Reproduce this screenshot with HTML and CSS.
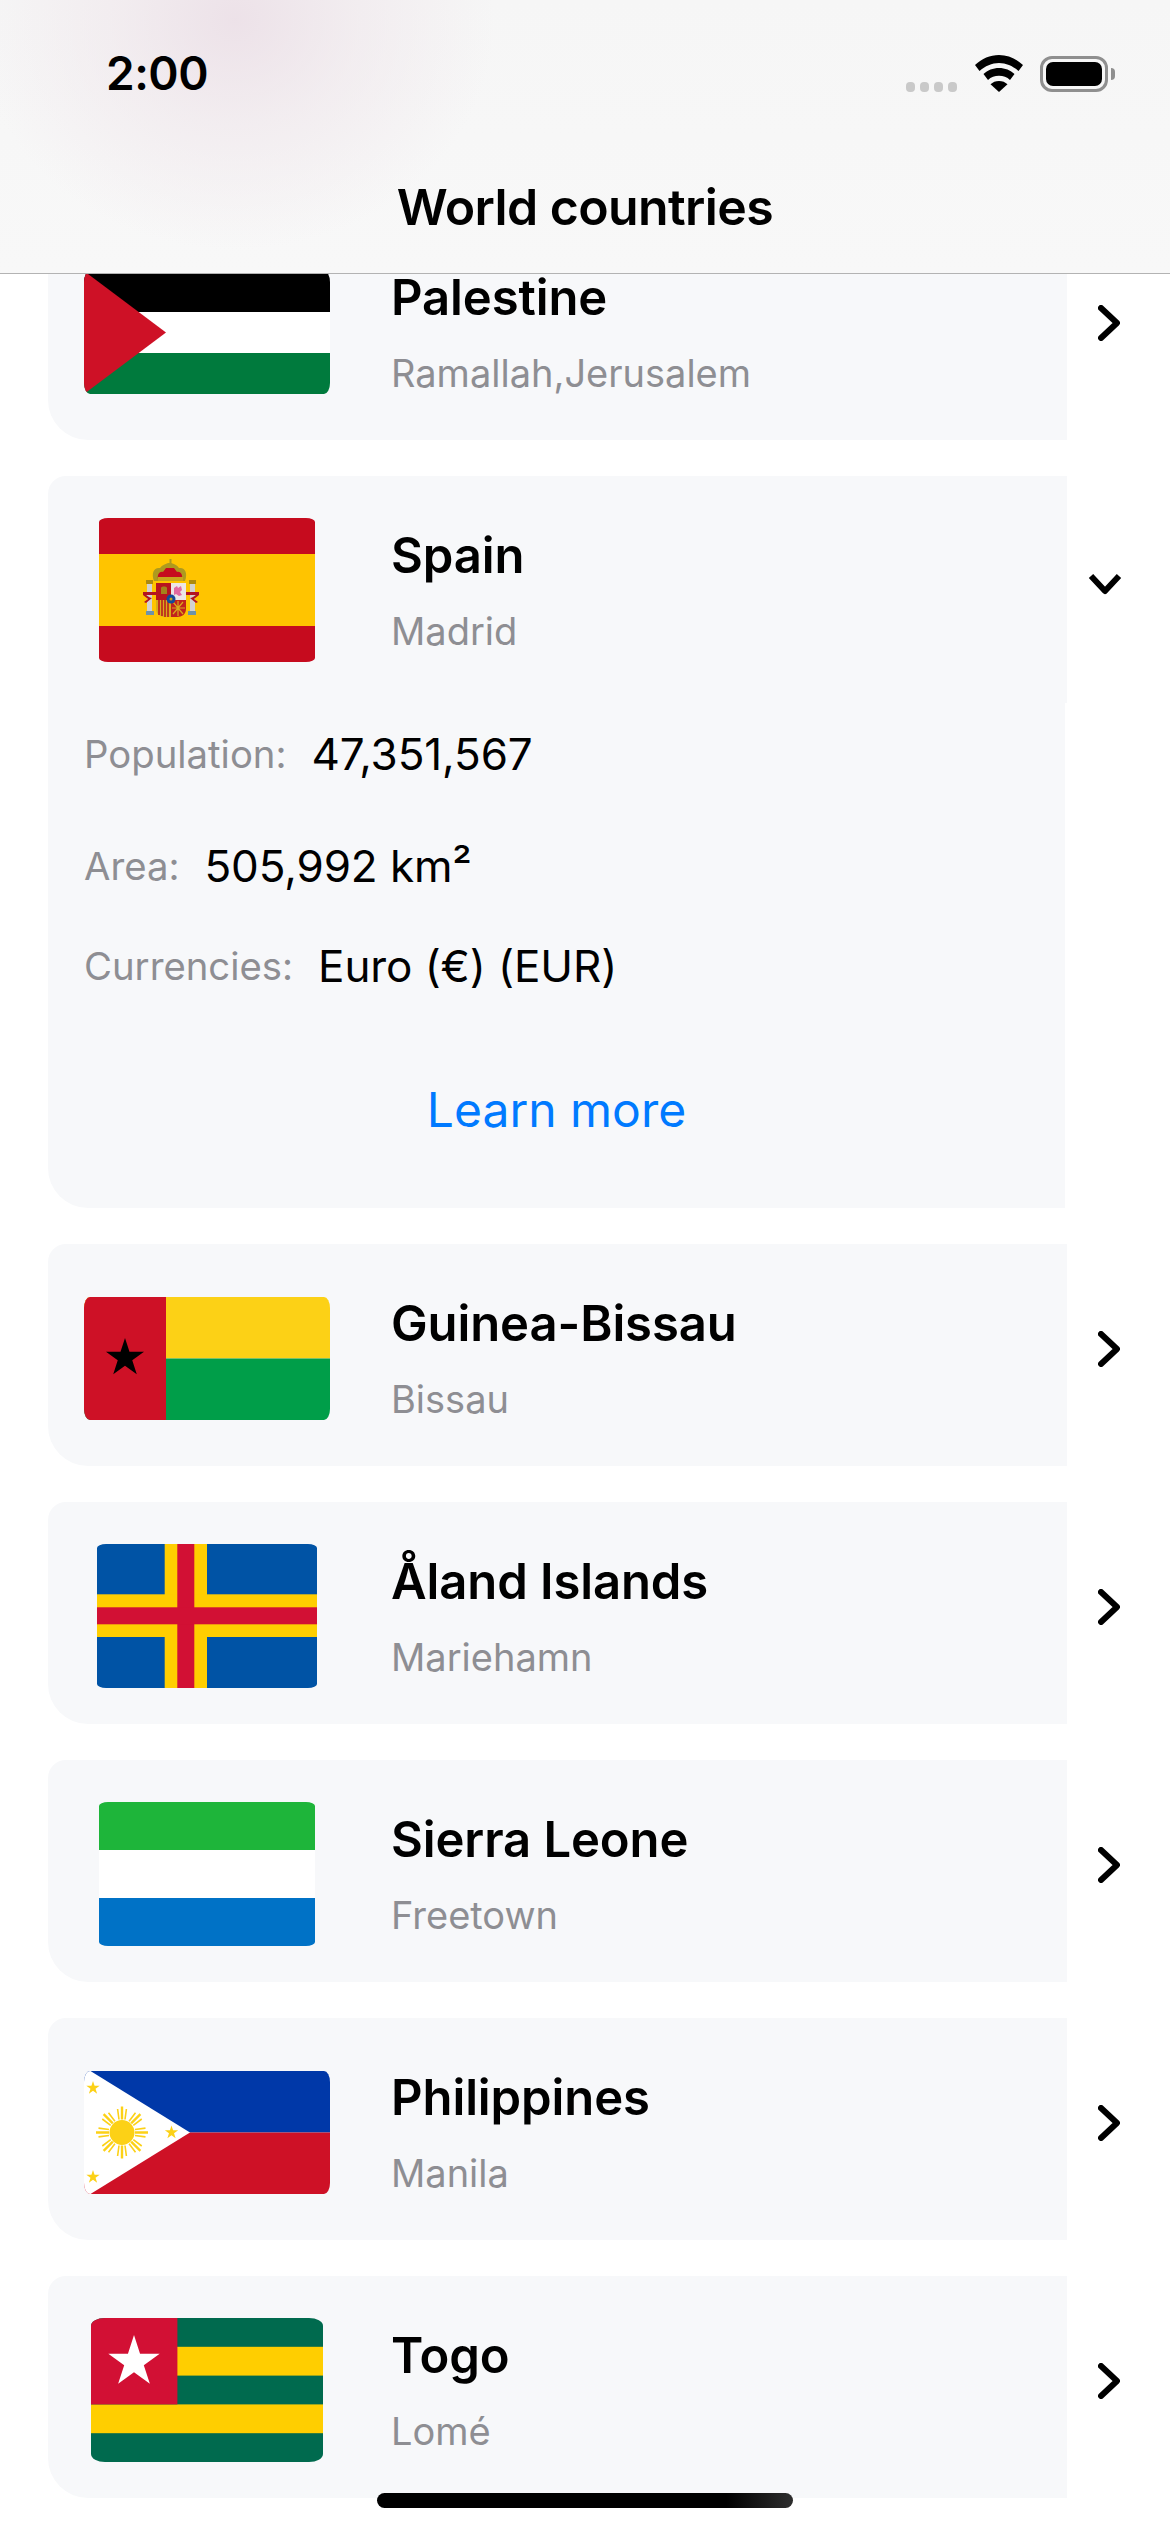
FILE: index.html
```html
<!DOCTYPE html>
<html lang="en">
<head>
<meta charset="utf-8">
<title>World countries</title>
<link rel="stylesheet" href="styles.css">
</head>
<body>
<div class="screen">
  <header class="topbar">
    <div class="status">
      <span class="time">2:00</span>
      <div class="status-icons">
        <div class="dots"><i></i><i></i><i></i><i></i></div>
        <svg class="wifi" viewBox="0 0 48 37"><path d="M24 0C15 0 7 3.500 0 10l4.500 6C10 11 17 8 24 8s14 3 19.500 8L48 10C41 3.500 33 0 24 0z"/><path d="M24 13c-6 0-11.500 2.200-15.500 6l4.500 6c3-2.800 6.800-4.200 11-4.200s8 1.400 11 4.200l4.500-6C35.500 15.200 30 13 24 13z"/><path d="M24 26c-3.300 0-6.300 1.200-8.500 3.300L24 37l8.500-7.700C30.300 27.200 27.300 26 24 26z"/></svg>
        <div class="battery"><div class="battery-fill"></div></div>
        <div class="battery-nub"></div>
      </div>
    </div>
    <h1 class="title">World countries</h1>
  </header>

  <main class="list">
    <div class="list-inner">
      <article class="row">
        <div class="card">
          <div class="flag-box">
            <svg class="flag flag-wide" viewBox="0 0 246 123"><rect width="246" height="41" fill="#000"/><rect y="41" width="246" height="41" fill="#fff"/><rect y="82" width="246" height="41" fill="#007a3d"/><polygon points="0,0 82,61.500 0,123" fill="#ce1126"/></svg>
          </div>
          <div class="names"><div class="name">Palestine</div><div class="capital">Ramallah,Jerusalem</div></div>
        </div>
        <svg class="chev" viewBox="0 0 22 36"><path d="M3 3l16 15L3 33"/></svg>
      </article>

      <article class="row">
        <div class="expanded">
          <div class="card card-head">
            <div class="flag-box">
              <svg class="flag flag-std" viewBox="0 0 216 144">
                <rect width="216" height="144" fill="#c60b1e"/><rect y="36" width="216" height="72" fill="#ffc400"/>
                <path d="M55 63c-3-8 0-14 6-13 2-3 6-4 8-5l3 0c3 1 6 2 8 5 6-1 9 5 6 13z" fill="#ad9a1f"/>
                <path d="M59 61c-1-5 2-8 5-7l3-4h8l3 4c3-1 6 2 5 7z" fill="#c60b1e"/>
                <rect x="59" y="59" width="25" height="4" fill="#c8a41c"/>
                <rect x="70.500" y="41" width="2" height="9" fill="#ad9a1f"/>
                <rect x="47" y="62" width="7" height="4" fill="#ad8a10"/><rect x="90" y="62" width="7" height="4" fill="#ad8a10"/>
                <rect x="48" y="66" width="5" height="27" fill="#d2d2d2"/><rect x="91" y="66" width="5" height="27" fill="#d2d2d2"/>
                <rect x="47" y="93" width="8" height="4" fill="#6d93a8"/><rect x="89" y="93" width="8" height="4" fill="#6d93a8"/>
                <path d="M44 74h14v3H47c2 1 4 3 6 3l-6 5-2-1 4-3-5-4z" fill="#b31322"/>
                <path d="M100 74H86v3h11c-2 1-4 3-6 3l6 5 2-1-4-3 5-4z" fill="#b31322"/>
                <path d="M57 65h15v17H57z" fill="#b8141f"/><rect x="72" y="65" width="15" height="17" fill="#ece6e6"/>
                <path d="M57 82h15v17h-6c-6 0-9-4-9-8z" fill="#d8ab1a"/>
                <path d="M60 82v15M63 82v16M66 82v17M69 82v17" stroke="#b8141f" stroke-width="1.500"/>
                <path d="M72 82h15v9c0 5-4 8-9 8h-6z" fill="#c2231c"/>
                <path d="M74 84l10 12M84 84L74 96M79 83v15M73 90h13" stroke="#d8ab1a" stroke-width="1.200"/>
                <path d="M62 76v-6c0-2 6-2 6 0v6z" fill="#a5821a"/>
                <path d="M75 70l3-2 1 2 3-2 1 4-2 2 2 3-3 1-3-2-2 1z" fill="#e26aa0"/>
                <circle cx="72" cy="81" r="4.500" fill="#134a9c"/><circle cx="72" cy="81" r="1.500" fill="#c8a41c"/>
              </svg>
            </div>
            <div class="names"><div class="name">Spain</div><div class="capital">Madrid</div></div>
          </div>
          <div class="details">
            <div class="fact fact-pop"><span class="fact-label">Population:</span><span class="fact-value">47,351,567</span></div>
            <div class="fact fact-area"><span class="fact-label">Area:</span><span class="fact-value">505,992 km²</span></div>
            <div class="fact fact-cur"><span class="fact-label">Currencies:</span><span class="fact-value">Euro (€) (EUR)</span></div>
            <a class="learn" href="#">Learn more</a>
          </div>
        </div>
        <svg class="chev-down" viewBox="0 0 34 22"><path d="M3 3l14 15L31 3"/></svg>
      </article>

      <article class="row">
        <div class="card">
          <div class="flag-box">
            <svg class="flag flag-wide" viewBox="0 0 246 123"><rect width="246" height="61.500" fill="#fcd116"/><rect y="61.500" width="246" height="61.500" fill="#009e49"/><rect width="82" height="123" fill="#ce1126"/><polygon transform="translate(41 61) scale(20)" points="0,-1 .2245,-.309 .951,-.309 .363,.118 .588,.809 0,.382 -.588,.809 -.363,.118 -.951,-.309 -.2245,-.309" fill="#000"/></svg>
          </div>
          <div class="names"><div class="name">Guinea-Bissau</div><div class="capital">Bissau</div></div>
        </div>
        <svg class="chev" viewBox="0 0 22 36"><path d="M3 3l16 15L3 33"/></svg>
      </article>

      <article class="row">
        <div class="card">
          <div class="flag-box">
            <svg class="flag flag-aland" viewBox="0 0 220 144"><rect width="220" height="144" fill="#0053a5"/><rect x="67.700" width="42.300" height="144" fill="#ffce00"/><rect y="50.300" width="220" height="42.700" fill="#ffce00"/><rect x="80.300" width="17" height="144" fill="#d21034"/><rect y="63.300" width="220" height="17" fill="#d21034"/></svg>
          </div>
          <div class="names"><div class="name">Åland Islands</div><div class="capital">Mariehamn</div></div>
        </div>
        <svg class="chev" viewBox="0 0 22 36"><path d="M3 3l16 15L3 33"/></svg>
      </article>

      <article class="row">
        <div class="card">
          <div class="flag-box">
            <svg class="flag flag-std" viewBox="0 0 216 144"><rect width="216" height="48" fill="#1eb53a"/><rect y="48" width="216" height="48" fill="#fff"/><rect y="96" width="216" height="48" fill="#0072c6"/></svg>
          </div>
          <div class="names"><div class="name">Sierra Leone</div><div class="capital">Freetown</div></div>
        </div>
        <svg class="chev" viewBox="0 0 22 36"><path d="M3 3l16 15L3 33"/></svg>
      </article>

      <article class="row">
        <div class="card">
          <div class="flag-box">
            <svg class="flag flag-wide" viewBox="0 0 246 123">
              <defs>
                <g id="ray" stroke="#fcd116"><path d="M0-13V-26" stroke-width="2.400"/><path d="M-3-13L-4.400-23.500M3-13L4.400-23.500" stroke-width="1.600"/></g>
                <polygon id="ph-star" points="0,-1 .2245,-.309 .951,-.309 .363,.118 .588,.809 0,.382 -.588,.809 -.363,.118 -.951,-.309 -.2245,-.309" fill="#fcd116"/>
              </defs>
              <rect width="246" height="61.500" fill="#0038a8"/><rect y="61.500" width="246" height="61.500" fill="#ce1126"/>
              <polygon points="0,-4 106,61.500 0,127" fill="#fff"/>
              <g transform="translate(38 61.500)">
                <use href="#ray"/><use href="#ray" transform="rotate(45)"/><use href="#ray" transform="rotate(90)"/><use href="#ray" transform="rotate(135)"/><use href="#ray" transform="rotate(180)"/><use href="#ray" transform="rotate(225)"/><use href="#ray" transform="rotate(270)"/><use href="#ray" transform="rotate(315)"/>
                <circle r="12.500" fill="#fcd116"/>
              </g>
              <use href="#ph-star" transform="translate(9 17) scale(7)"/>
              <use href="#ph-star" transform="translate(87.500 61.500) scale(7)"/>
              <use href="#ph-star" transform="translate(9 106) scale(7)"/>
            </svg>
          </div>
          <div class="names"><div class="name">Philippines</div><div class="capital">Manila</div></div>
        </div>
        <svg class="chev" viewBox="0 0 22 36"><path d="M3 3l16 15L3 33"/></svg>
      </article>

      <article class="row">
        <div class="card">
          <div class="flag-box">
            <svg class="flag flag-togo" viewBox="0 0 232 144"><rect width="232" height="144" fill="#006a4e"/><rect y="28.800" width="232" height="28.800" fill="#ffce00"/><rect y="86.400" width="232" height="28.800" fill="#ffce00"/><rect width="86.400" height="86.400" fill="#d21034"/><polygon transform="translate(43 44) scale(27)" points="0,-1 .2245,-.309 .951,-.309 .363,.118 .588,.809 0,.382 -.588,.809 -.363,.118 -.951,-.309 -.2245,-.309" fill="#fff"/></svg>
          </div>
          <div class="names"><div class="name">Togo</div><div class="capital">Lomé</div></div>
        </div>
        <svg class="chev" viewBox="0 0 22 36"><path d="M3 3l16 15L3 33"/></svg>
      </article>
    </div>
  </main>

  <div class="home-indicator"></div>
</div>
</body>
</html>
```
FILE: styles.css
```css
* { box-sizing: border-box; }
html, body { margin: 0; padding: 0; background: #fff; }
body { font-family: Inter, "Liberation Sans", sans-serif; color: #000; }

.screen {
  position: relative;
  width: 1170px;
  height: 2532px;
  overflow: hidden;
  display: flex;
  flex-direction: column;
}

/* Top bar */
.topbar {
  position: relative;
  z-index: 2;
  flex: none;
  height: 274px;
  border-bottom: 1.5px solid #b3b3b3;
  background:
    radial-gradient(ellipse 260px 230px at 235px 20px, rgba(235, 222, 230, .85), rgba(239, 230, 235, .6) 45%, rgba(247, 247, 247, 0) 100%),
    linear-gradient(#f6f6f6, #f8f8f8);
}
.status {
  display: flex;
  align-items: flex-start;
  justify-content: space-between;
  height: 170px;
  padding: 43px 55px 0 106px;
}
.time {
  font-size: 46px;
  font-weight: 600;
  line-height: 60px;
  letter-spacing: -.5px;
}
.status-icons { display: flex; align-items: flex-start; padding-top: 12px; }
.dots { display: flex; gap: 5px; margin-top: 27px; margin-right: 18px; }
.dots i { display: block; width: 9px; height: 10px; border-radius: 4px; background: #c9c9c9; }
.wifi { display: block; width: 48px; height: 37px; margin-right: 17px; fill: #000; }
.battery {
  width: 68px;
  height: 36px;
  margin-top: 1px;
  padding: 3px;
  border: 3px solid #8f8f8f;
  border-radius: 12px;
}
.battery-fill { width: 100%; height: 100%; background: #000; border-radius: 7px; }
.battery-nub { width: 4px; height: 12px; margin: 13px 0 0 3px; background: #8f8f8f; border-radius: 0 5px 5px 0; }
.title {
  margin: 2px 0 0;
  text-align: center;
  font-size: 50px;
  font-weight: 600;
  line-height: 70px;
  letter-spacing: -.6px;
}

/* List */
.list { flex: 1; min-height: 0; overflow: hidden; }
.list-inner {
  margin-top: -56px;
  padding-left: 48px;
  display: flex;
  flex-direction: column;
  gap: 36px;
}
.row { display: flex; align-items: flex-start; }
.card {
  flex: none;
  display: flex;
  width: 1019px;
  height: 222px;
  padding-left: 36px;
  background: #f7f8fa;
  border-radius: 18px 0 0 40px;
}
.flag-box {
  flex: none;
  display: flex;
  align-items: center;
  justify-content: center;
  width: 246px;
  height: 144px;
  margin-top: 42px;
}
.flag { display: block; }
.flag-wide { width: 246px; height: 123px; border-radius: 6px / 11px; }
.flag-std { width: 216px; height: 144px; border-radius: 9px / 4px; }
.flag-aland { width: 220px; height: 144px; border-radius: 9px / 4px; }
.flag-togo { width: 232px; height: 144px; border-radius: 14px / 8px; }
.names { margin-left: 61px; padding-top: 51px; }
.name { font-size: 49px; font-weight: 600; line-height: 58px; letter-spacing: -.1px; }
.capital { margin-top: 23px; font-size: 38px; line-height: 46px; color: #8e8e93; }
.chev, .chev-down { flex: none; fill: none; stroke: #000; stroke-width: 6; stroke-linecap: round; stroke-linejoin: round; }
.chev { width: 22px; height: 36px; margin: 87px 0 0 31px; }
.chev-down { width: 34px; height: 22px; margin: 97px 0 0 21px; stroke-linecap: butt; }

/* Expanded card */
.expanded { flex: none; width: 1019px; }
.card-head { height: 227px; border-radius: 18px 0 0 0; }
.details {
  width: 1017px;
  height: 505px;
  padding: 24px 0 0 36px;
  background: #f7f8fa;
  border-radius: 0 0 0 40px;
}
.fact { display: flex; align-items: center; gap: 25px; line-height: 54px; height: 54px; }
.fact-area { margin-top: 58px; }
.fact-cur { margin-top: 46px; }
.fact-label { font-size: 38.300px; color: #8e8e93; }
.fact-value { font-size: 44px; letter-spacing: -.1px; }
.learn {
  display: block;
  margin: 90px 0 0 -36px;
  text-align: center;
  color: #007aff;
  font-size: 48px;
  line-height: 54px;
  text-decoration: none;
}

/* Home indicator */
.home-indicator {
  position: absolute;
  z-index: 3;
  left: 377px;
  top: 2493px;
  width: 416px;
  height: 15px;
  border-radius: 8px;
  background: linear-gradient(90deg, #000 0, #000 84%, #2e2e2e 100%);
}
```
